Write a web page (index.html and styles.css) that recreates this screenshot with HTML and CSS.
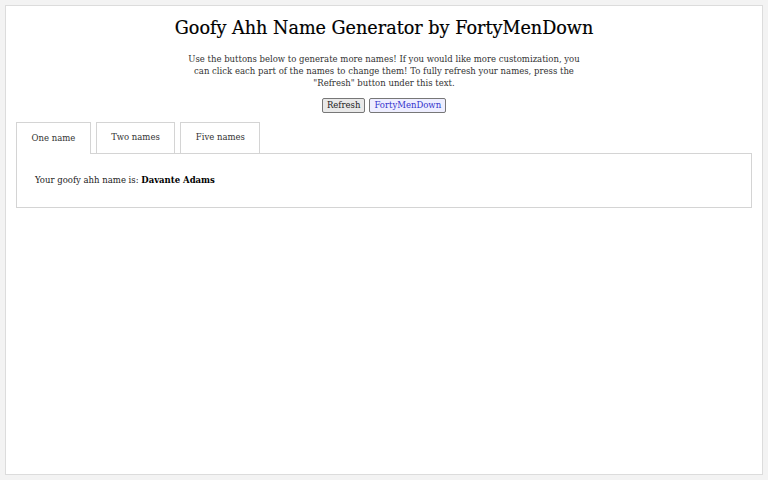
FILE: index.html
```html
<!DOCTYPE html>
<html>
<head>
<meta charset="utf-8">
<link rel="stylesheet" href="styles.css">
</head>
<body>
<div class="page">
  <h1 class="title">Goofy Ahh Name Generator by FortyMenDown</h1>
  <p class="intro">Use the buttons below to generate more names! If you would like more customization, you can click each part of the names to change them! To fully refresh your names, press the "Refresh" button under this text.</p>
  <div class="actions">
    <button class="btn">Refresh</button>
    <button class="btn btn-link">FortyMenDown</button>
  </div>
  <div class="tabs">
    <div class="tab active">One name</div>
    <div class="tab">Two names</div>
    <div class="tab">Five names</div>
  </div>
  <div class="panel">
    <p class="result">Your goofy ahh name is: <b>Davante Adams</b></p>
  </div>
</div>
</body>
</html>
```
FILE: styles.css
```css
html, body { margin: 0; padding: 0; }
body {
  background: #f3f3f3;
  padding: 5px;
  font-family: "DejaVu Serif", serif;
  color: #222;
}
.page {
  background: #fff;
  border: 1px solid #dcdcdc;
  height: 470px;
  padding: 0 10px;
  box-sizing: border-box;
}
.title {
  font-size: 17.6px;
  line-height: 24px;
  font-weight: normal;
  text-align: center;
  margin: 10px 0 0;
  color: #000;
  -webkit-text-stroke: 0.2px #000;
}
.intro {
  font-size: 8.5px;
  line-height: 12px;
  text-align: center;
  max-width: 396px;
  margin: 13px auto 0;
  color: #333;
}
.actions {
  display: flex;
  justify-content: center;
  gap: 4px;
  margin-top: 9px;
}
.btn {
  font-family: "DejaVu Serif", serif;
  font-size: 8.5px;
  line-height: 11px;
  padding: 1px 4px;
  background: #e9e9e9;
  border: 1px solid #777;
  border-radius: 2px;
  color: #222;
}
.btn-link { background: #eef; color: #33c; }
.tabs {
  display: flex;
  gap: 5px;
  margin-top: 8px;
}
.tab {
  font-size: 8.5px;
  color: #333;
  border: 1px solid #d4d4d4;
  border-bottom: none;
  padding: 0 14.5px;
  height: 31px;
  line-height: 31px;
  position: relative;
  top: 1px;
  background: #fff;
}
.tab:not(.active) { height: 30px; line-height: 28px; border-bottom: 1px solid #d4d4d4; }
.panel {
  border: 1px solid #d4d4d4;
  height: 53px;
  padding: 0 18px;
}
.result {
  font-size: 8.5px;
  margin: 21px 0 0;
  color: #222;
}
.result b { color: #000; }
```
